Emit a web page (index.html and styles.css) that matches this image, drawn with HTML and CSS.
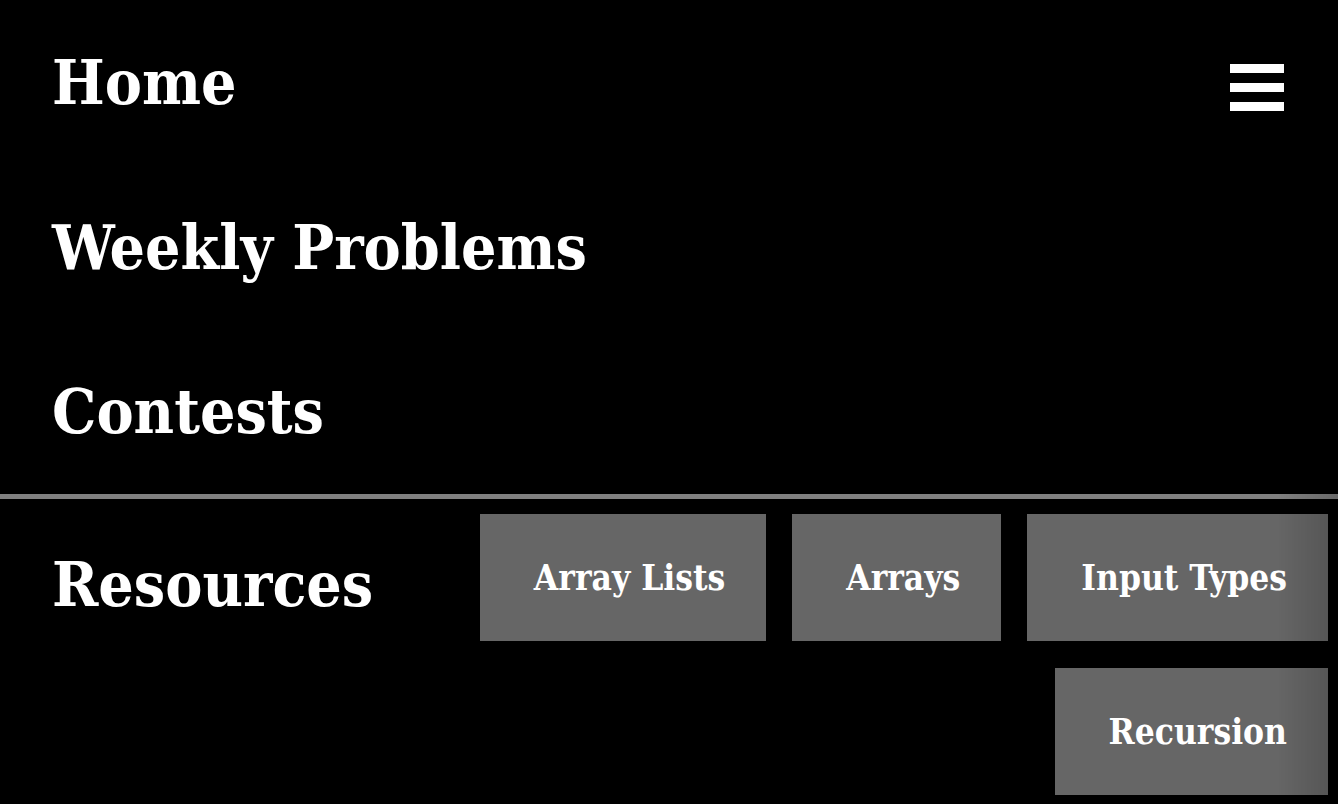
FILE: index.html
```html
<!DOCTYPE html>
<html>
<head>
<meta charset="utf-8">
<link rel="stylesheet" href="styles.css">
</head>
<body>
<nav class="menu">
  <div class="row row-top">
    <a class="nav-link" href="#">Home</a>
    <button class="burger" aria-label="Menu"><span></span><span></span><span></span></button>
  </div>
  <div class="row"><a class="nav-link" href="#">Weekly Problems</a></div>
  <div class="row row-last"><a class="nav-link" href="#">Contests</a></div>
  <div class="resources">
    <a class="nav-link res-title" href="#">Resources</a>
    <div class="sub">
      <a class="chip" href="#">Array Lists</a>
      <a class="chip" href="#">Arrays</a>
      <a class="chip" href="#">Input Types</a>
      <a class="chip" href="#">Recursion</a>
    </div>
  </div>
</nav>
<div class="edge-shade"></div>
</body>
</html>
```
FILE: styles.css
```css
html, body {
  margin: 0;
  padding: 0;
  background: #000;
  height: 100%;
  overflow: hidden;
}
body {
  font-family: "DejaVu Serif Condensed", "DejaVu Serif", serif;
  font-weight: bold;
  color: #fff;
}
a { color: #fff; text-decoration: none; }
.menu {
  display: flex;
  flex-direction: column;
}
.row {
  display: flex;
  align-items: center;
  justify-content: space-between;
  height: 165px;
  padding: 0 54px 0 52px;
}
.row-last {
  height: 164px;
  border-bottom: 5px solid #808080;
}
.nav-link {
  font-size: 62px;
  line-height: 1;
}
.burger {
  display: flex;
  flex-direction: column;
  gap: 10px;
  padding: 0;
  background: none;
  border: 0;
  margin-top: 10px;
}
.burger span {
  display: block;
  width: 54px;
  height: 9px;
  background: #fff;
}
.resources {
  display: flex;
  align-items: flex-start;
  padding: 15px 10px 0 52px;
}
.res-title {
  flex: none;
  margin-top: 40px;
  margin-right: 40px;
}
.sub {
  flex: 1;
  display: flex;
  flex-wrap: wrap;
  justify-content: flex-end;
  gap: 27px 26px;
}
.chip {
  display: flex;
  align-items: center;
  height: 127px;
  padding: 0 41px 0 54px;
  background: #666;
  font-size: 35px;
}
.edge-shade {
  position: fixed;
  top: 0;
  right: 0;
  bottom: 0;
  width: 60px;
  background: linear-gradient(to right, rgba(0,0,0,0), rgba(0,0,0,0.18));
  pointer-events: none;
}
```
